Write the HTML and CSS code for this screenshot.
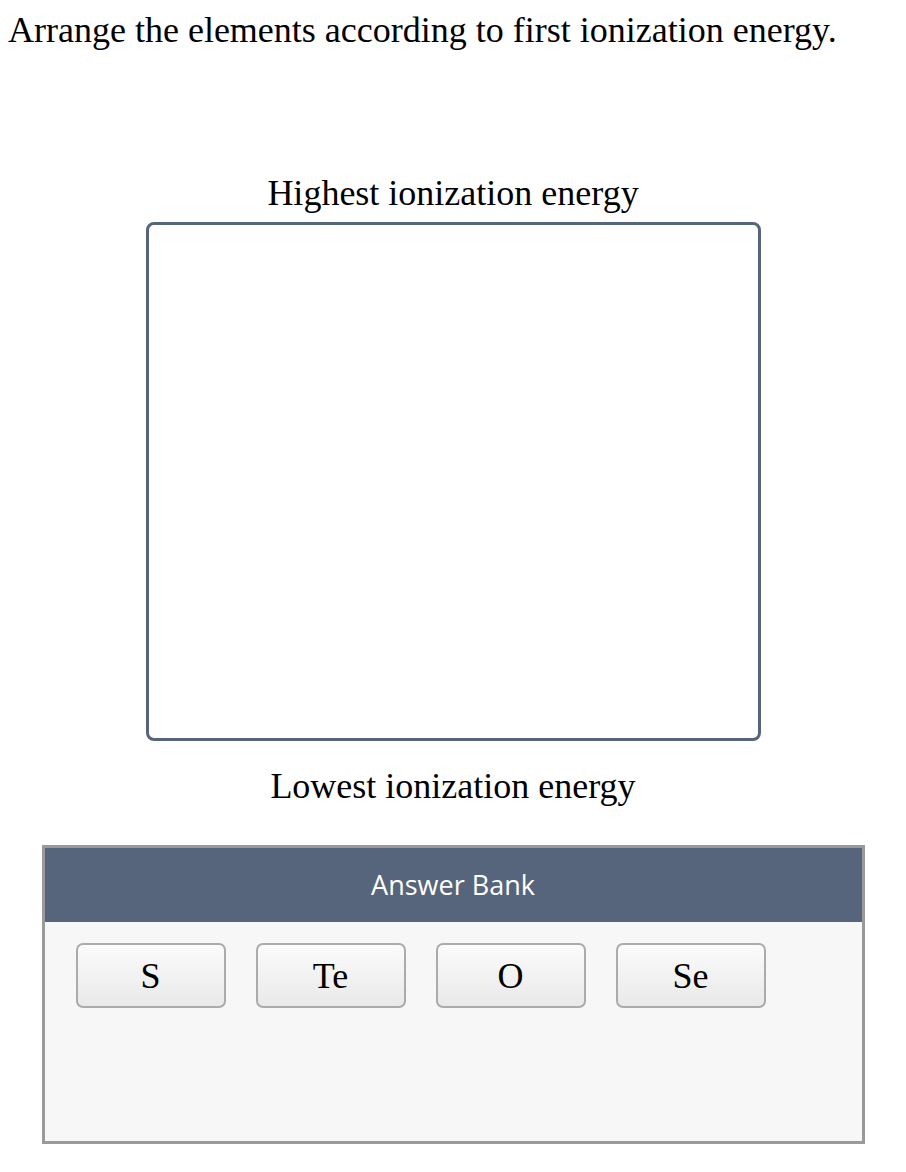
FILE: index.html
```html
<!DOCTYPE html>
<html lang="en">
<head>
  <meta charset="UTF-8" />
  <title>Ionization Energy Ranking</title>
  <link rel="stylesheet" href="styles.css">
</head>
<body>

<p class="prompt">Arrange the elements according to first ionization energy.</p>

<div class="ranking">
  <div class="rank-label">Highest ionization energy</div>
  <div class="drop-zone" aria-label="Ranking area"></div>
  <div class="rank-label">Lowest ionization energy</div>
</div>

<div class="answer-bank">
  <div class="bank-header">Answer Bank</div>
  <div class="bank-items">
    <button class="chip">S</button>
    <button class="chip">Te</button>
    <button class="chip">O</button>
    <button class="chip">Se</button>
  </div>
</div>

</body>
</html>
```

FILE: styles.css
```css
body {
  font-family: 'Liberation Serif', 'Times New Roman', serif;
  margin: 8px;
  background: #fff;
  color: #000;
}
.prompt {
  font-size: 36px;
  margin: 0;
  line-height: 44px;
}
.ranking {
  display: flex;
  flex-direction: column;
  align-items: center;
  margin-top: 122px;
}
.rank-label {
  font-size: 36px;
  line-height: 38px;
}
.drop-zone {
  width: 609px;
  height: 513px;
  border: 3px solid #56657c;
  border-radius: 8px;
  margin: 10px 0 26px;
}
.answer-bank {
  width: 817px;
  margin: 40px auto 0;
  border: 3px solid #9a9a9a;
  background: #f7f7f7;
}
.bank-header {
  background: #56657c;
  color: #fff;
  font-family: 'Open Sans', sans-serif;
  font-size: 27px;
  text-align: center;
  height: 74px;
  line-height: 74px;
}
.bank-items {
  display: flex;
  gap: 30px;
  padding: 21px 31px 0;
  height: 219px;
  box-sizing: border-box;
}
.chip {
  width: 150px;
  height: 65px;
  border: 2px solid #ababab;
  border-radius: 7px;
  background: linear-gradient(#fbfbfb, #e9e9e9);
  font-family: 'Liberation Serif', 'Times New Roman', serif;
  font-size: 36px;
  color: #000;
  padding: 0;
}
```
